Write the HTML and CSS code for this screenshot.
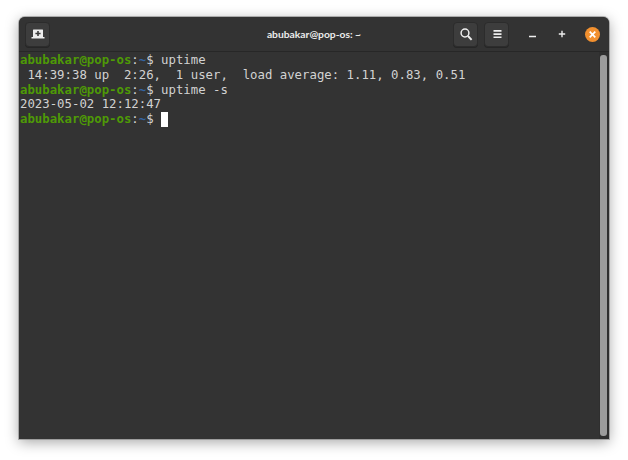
FILE: index.html
```html
<!DOCTYPE html>
<html lang="en">
<head>
<meta charset="utf-8">
<title>abubakar@pop-os: ~</title>
<link rel="stylesheet" href="styles.css">
</head>
<body>
<div class="window">
  <header class="header">
    <div class="group">
      <button class="btn" aria-label="New tab">
        <svg width="16" height="16" viewBox="0 0 16 16"><path fill="#eee" fill-rule="evenodd" d="M3.500 3.500h9a.5.500 0 0 1 .5.500V11h1.500v1.500h-13V11H3V4a.5.500 0 0 1 .5-.5zM7.200 5V6.700H5.400V8.200h1.800V10h1.600V8.200h1.800V6.700H8.800V5z"/></svg>
      </button>
    </div>
    <div class="title">abubakar@pop-os: ~</div>
    <div class="group end">
      <button class="btn" aria-label="Search">
        <svg width="16" height="16" viewBox="0 0 16 16"><circle cx="7" cy="7" r="3.900" fill="none" stroke="#eee" stroke-width="1.500"/><path d="M10 10l3.600 3.800" stroke="#eee" stroke-width="1.900" fill="none"/></svg>
      </button>
      <button class="btn" aria-label="Menu">
        <svg width="16" height="16" viewBox="0 0 16 16"><path fill="#eee" d="M4.500 4h8v1.700h-8zM4.500 7.200h8v1.700h-8zM4.500 10.400h8v1.700h-8z"/></svg>
      </button>
      <div class="winbtns">
        <svg class="winicon" width="10" height="10" viewBox="0 0 10 10"><path fill="#eee" d="M0 6.700h7v1.500H0z"/></svg>
        <svg class="winicon" width="10" height="10" viewBox="0 0 10 10"><path fill="#eee" d="M4.300 1.800h1.400v2.500h2.500v1.400H5.700v2.500H4.300V5.700H1.800V4.300h2.500z"/></svg>
        <span class="close"><svg width="9" height="9" viewBox="0 0 9 9"><path stroke="#fff" stroke-width="1.700" d="M1.700 1.700l5.600 5.600M7.300 1.700l-5.600 5.600"/></svg></span>
      </div>
    </div>
  </header>
  <main class="body">
    <div class="term">
      <div class="line"><span class="host">abubakar@pop-os</span>:<span class="path">~</span>$ uptime</div>
      <div class="line"> 14:39:38 up  2:26,  1 user,  load average: 1.11, 0.83, 0.51</div>
      <div class="line"><span class="host">abubakar@pop-os</span>:<span class="path">~</span>$ uptime -s</div>
      <div class="line">2023-05-02 12:12:47</div>
      <div class="line"><span class="host">abubakar@pop-os</span>:<span class="path">~</span>$ <span class="cursor"></span></div>
    </div>
    <div class="scroll"><div class="thumb"></div></div>
  </main>
</div>
</body>
</html>
```
FILE: styles.css
```css
html, body { margin: 0; height: 100%; background: #fff; }
body { padding: 17px 19px 21px; box-sizing: border-box; width: 628px; height: 460px; overflow: hidden; }
.window {
  height: 100%;
  display: flex;
  flex-direction: column;
  background: #333;
  border-radius: 6px 6px 0 0;
  box-shadow: 0 0 0 1px rgba(125,125,125,.55), 0 3px 14px rgba(0,0,0,.36);
  overflow: hidden;
}
.header {
  flex: 0 0 34px;
  display: grid;
  grid-template-columns: 1fr auto 1fr;
  align-items: center;
  padding: 0 9px 0 6px;
  background: #333;
  border-bottom: 1px solid #272727;
}
.group { display: flex; align-items: center; gap: 6px; }
.group.end { justify-content: flex-end; }
.btn {
  width: 25px; height: 25px; padding: 0;
  display: flex; align-items: center; justify-content: center;
  background: #3d3d3d;
  border: 1px solid #2c2c2c;
  border-radius: 4px;
  box-shadow: 0 1px 0 #262626;
}
.title {
  padding-left: 3px;
  font: 700 10.3px Lato, "Noto Sans", sans-serif;
  color: #ececec;
  text-align: center;
}
.winbtns { display: flex; align-items: center; gap: 18px; margin-left: 14px; }
.winicon { display: block; }
.close {
  width: 15px; height: 15px; border-radius: 50%;
  background: #f2902f;
  display: flex; align-items: center; justify-content: center;
}
.body { flex: 1; display: flex; min-height: 0; background: #333; }
.term {
  flex: 1;
  padding: 1px 0 0 1px;
  font: 12.33px/14.75px "DejaVu Sans Mono", monospace;
  color: #d2d2d2;
}
.line { height: 14.75px; white-space: pre; }
.host { color: #4e9a06; font-weight: 700; }
.path { color: #3465a4; font-weight: 700; }
.cursor { display: inline-block; width: 7.4px; height: 14.75px; background: #fff; vertical-align: top; }
.scroll { flex: 0 0 10px; padding: 3px 2px 3px 1px; box-sizing: border-box; background: #2f2f2f; }
.thumb { height: 100%; background: #9c9c9c; border-radius: 3px; }
```
